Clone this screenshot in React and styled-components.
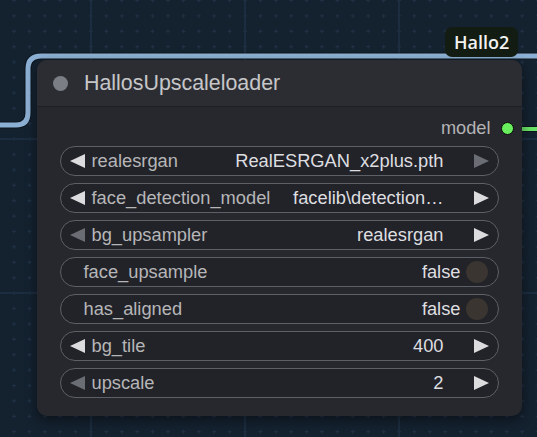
import React from "react";
import styled, { createGlobalStyle } from "styled-components";

const GlobalStyle = createGlobalStyle`
  html, body { margin: 0; padding: 0; background: #14212f; overflow: hidden; }
  * { box-sizing: border-box; }
`;

const Canvas = styled.div`
  position: relative;
  width: 537px;
  height: 437px;
  overflow: hidden;
  background: #14212f;
  font-family: "Liberation Sans", Arial, sans-serif;
`;

const Backdrop = styled.svg`
  position: absolute;
  left: 0;
  top: 0;
  width: 537px;
  height: 437px;
`;

const Node = styled.div`
  position: absolute;
  left: 37px;
  top: 60px;
  width: 485px;
  display: flex;
  flex-direction: column;
  background: #27282d;
  border-radius: 10px;
  overflow: hidden;
  box-shadow: 0 4px 12px rgba(0, 0, 0, 0.45);
`;

const TitleBar = styled.div`
  height: 47px;
  display: flex;
  align-items: center;
  gap: 16px;
  padding-left: 16px;
  background: #2c2d33;
  border-bottom: 1px solid #1e1f23;
`;

const TitleDot = styled.span`
  width: 15px;
  height: 15px;
  border-radius: 50%;
  background: #7c7e86;
`;

const Title = styled.span`
  font-size: 21.4px;
  color: #c6c6c8;
`;

const OutputRow = styled.div`
  height: 39px;
  display: flex;
  align-items: center;
  justify-content: flex-end;
  gap: 10px;
  padding: 3px 8.5px 0 0;
`;

const OutputLabel = styled.span`
  font-size: 18.2px;
  color: #b3b3b5;
`;

const OutputDot = styled.span`
  width: 13px;
  height: 13px;
  border-radius: 50%;
  background: #68ee5c;
  border: 1.5px solid #0b0b0b;
`;

const Widgets = styled.div`
  display: flex;
  flex-direction: column;
  gap: 7px;
  padding: 0 23px 18px 23px;
`;

const Pill = styled.div`
  height: 30px;
  display: flex;
  align-items: center;
  border: 1.5px solid #5d6067;
  border-radius: 15px;
  background: #222328;
  padding: ${(p) => (p.$toggle ? "0 10.5px 0 22.5px" : "0 9.5px 0 8.5px")};
  font-size: 18.3px;
  white-space: nowrap;
`;

const Label = styled.span`
  color: #b6b6b8;
  margin-left: ${(p) => (p.$toggle ? "0" : "7px")};
`;

const Value = styled.span`
  flex: 1;
  text-align: right;
  color: #dedee0;
  margin-right: ${(p) => (p.$toggle ? "5px" : "30px")};
  overflow: hidden;
`;

const ArrowSvg = styled.svg`
  width: 15px;
  height: 14px;
  flex: none;
  fill: ${(p) => (p.$off ? "#6a6d74" : "#dcdcde")};
`;

const Toggle = styled.span`
  width: 22px;
  height: 22px;
  border-radius: 50%;
  background: #3a3530;
  flex: none;
`;

const Badge = styled.div`
  position: absolute;
  left: 445px;
  top: 27px;
  height: 30px;
  padding: 0 9px;
  display: flex;
  align-items: center;
  background: #131c12;
  border-radius: 7px;
  color: #f2f2f2;
  font-family: "Open Sans", "Noto Sans", sans-serif;
  font-weight: 600;
  font-size: 18px;
`;

const Arrow = ({ dir, off }) => (
  <ArrowSvg viewBox="0 0 15 14" $off={off}>
    {dir === "left" ? (
      <polygon points="15,0 15,14 0,7" />
    ) : (
      <polygon points="0,0 0,14 15,7" />
    )}
  </ArrowSvg>
);

const widgets = [
  { label: "realesrgan", value: "RealESRGAN_x2plus.pth", leftOff: false, rightOff: true },
  { label: "face_detection_model", value: "facelib\\detection…" },
  { label: "bg_upsampler", value: "realesrgan", leftOff: true },
  { label: "face_upsample", value: "false", toggle: true },
  { label: "has_aligned", value: "false", toggle: true },
  { label: "bg_tile", value: "400" },
  { label: "upscale", value: "2", leftOff: true },
];

const Widget = ({ w }) =>
  w.toggle ? (
    <Pill $toggle>
      <Label $toggle>{w.label}</Label>
      <Value $toggle>{w.value}</Value>
      <Toggle />
    </Pill>
  ) : (
    <Pill>
      <Arrow dir="left" off={w.leftOff} />
      <Label>{w.label}</Label>
      <Value>{w.value}</Value>
      <Arrow dir="right" off={w.rightOff} />
    </Pill>
  );

const Background = () => {
  const dots = [];
  for (let i = 0; i < 36; i++) {
    for (let j = 0; j < 30; j++) {
      const x = 14 + i * 15.4;
      const y = 0.5 + j * 15.4;
      dots.push(
        <path
          key={`${i}-${j}`}
          d={`M${x - 2} ${y}H${x + 2}M${x} ${y - 2}V${y + 2}`}
        />
      );
    }
  }
  return (
    <Backdrop viewBox="0 0 537 437">
      <g stroke="#1f3043" strokeWidth="1.2">{dots}</g>
      <g stroke="#1c2d3f" strokeWidth="2">
        <line x1="91" y1="0" x2="91" y2="437" />
        <line x1="245" y1="0" x2="245" y2="437" />
        <line x1="399" y1="0" x2="399" y2="437" />
        <line x1="0" y1="139" x2="537" y2="139" />
        <line x1="0" y1="293" x2="537" y2="293" />
      </g>
      <path
        d="M-5 125H16Q28 125 28 113V69Q28 56 41 56H545"
        fill="none"
        stroke="rgba(0,0,0,0.35)"
        strokeWidth="7"
      />
      <path
        d="M-5 125H16Q28 125 28 113V69Q28 56 41 56H545"
        fill="none"
        stroke="#8cb0d4"
        strokeWidth="5"
      />
      <path d="M510 129H545" stroke="rgba(0,0,0,0.35)" strokeWidth="6" />
      <path d="M510 129H545" stroke="#6ae467" strokeWidth="4" />
    </Backdrop>
  );
};

export default function App() {
  return (
    <>
      <GlobalStyle />
      <Canvas>
        <Background />
        <Node>
          <TitleBar>
            <TitleDot />
            <Title>HallosUpscaleloader</Title>
          </TitleBar>
          <OutputRow>
            <OutputLabel>model</OutputLabel>
            <OutputDot />
          </OutputRow>
          <Widgets>
            {widgets.map((w) => (
              <Widget key={w.label} w={w} />
            ))}
          </Widgets>
        </Node>
        <Badge>Hallo2</Badge>
      </Canvas>
    </>
  );
}
